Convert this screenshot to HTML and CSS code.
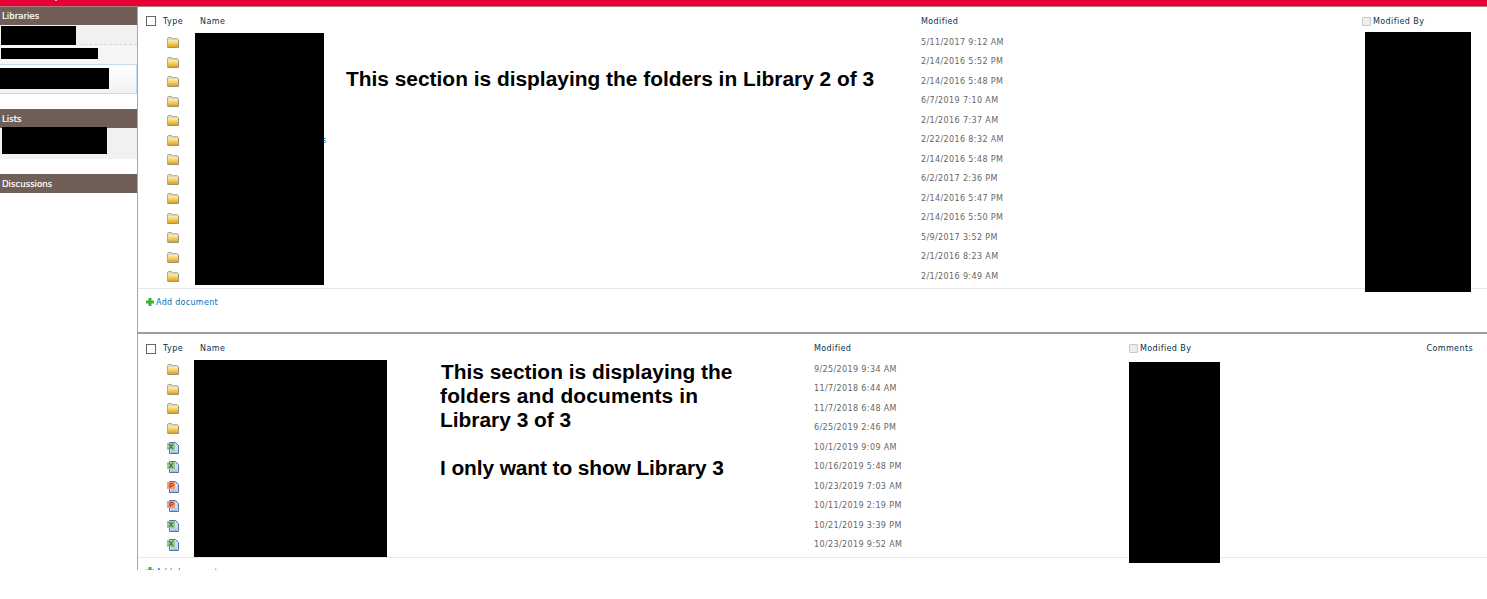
FILE: index.html
```html
<!DOCTYPE html>
<html lang="en">
<head>
<meta charset="utf-8">
<title>Libraries</title>
<link rel="stylesheet" href="styles.css">
</head>
<body>
<svg class="defs" width="0" height="0" aria-hidden="true">
  <defs>
    <linearGradient id="gold" x1="0" y1="0" x2="0" y2="1">
      <stop offset="0" stop-color="#fbeeb4"/>
      <stop offset=".5" stop-color="#f4cd5a"/>
      <stop offset="1" stop-color="#dc9f28"/>
    </linearGradient>
  </defs>
  <symbol id="folder" viewBox="0 0 12 11">
    <path d="M.5 10.5V1.5L1.2.5h3.3l.8 1.2h5.2l.5.5v8.3z" fill="#e0dac4" stroke="#b3aa8e"/>
    <rect x="1" y="3" width="10" height="7" fill="url(#gold)"/>
    <path d="M11.5 3v7.5H1" fill="none" stroke="#9c9480"/>
  </symbol>
  <symbol id="xls" viewBox="0 0 12 12">
    <path d="M2.5.5h6l3 3v8h-9z" fill="#cddcf1" stroke="#56739f"/>
    <path d="M4 9h6M4 10.5h6" stroke="#a3b9d8"/>
    <rect x="0" y="1" width="8" height="7" fill="#9cc598"/>
    <path d="M2 2l4 5M6 2L2 7" stroke="#2a7430" stroke-width="1.1"/>
  </symbol>
  <symbol id="ppt" viewBox="0 0 12 12">
    <path d="M2.5.5h6l3 3v8h-9z" fill="#cddcf1" stroke="#56739f"/>
    <path d="M4 9h6M4 10.5h6" stroke="#a3b9d8"/>
    <rect x="0" y="1" width="8" height="7" fill="#f09a7c"/>
    <path d="M3 7V2.5h2a1.2 1.2 0 0 1 0 2.6H3" fill="none" stroke="#a5321c" stroke-width="1"/>
  </symbol>
  <symbol id="plus" viewBox="0 0 8 8">
    <path d="M2.5 0h3v2.5H8v3H5.5V8h-3V5.5H0v-3h2.5z" fill="#3cb62a"/>
  </symbol>
</svg>

<header class="topbar"><span class="tick"></span></header>

<div class="page">
  <nav class="side">
    <h2 class="side-head">Libraries</h2>
    <div class="side-item"></div>
    <div class="side-item second"></div>
    <div class="side-item current"></div>
    <h2 class="side-head spaced">Lists</h2>
    <div class="side-item list"></div>
    <h2 class="side-head spaced">Discussions</h2>
    <i class="redact r-a"></i>
    <i class="redact r-b"></i>
    <i class="redact r-c"></i>
    <i class="redact r-d"></i>
  </nav>

  <main class="main">
    <section class="lib lib-one">
      <div class="row head">
        <span class="check"></span><span>Type</span><span>Name</span><span>Modified</span>
        <span class="by"><span class="check off"></span>Modified By</span>
      </div>
      <div class="row"><span></span><svg class="ico"><use href="#folder"/></svg><span></span><span class="date">5/11/2017 9:12 AM</span></div>
      <div class="row"><span></span><svg class="ico"><use href="#folder"/></svg><span></span><span class="date">2/14/2016 5:52 PM</span></div>
      <div class="row"><span></span><svg class="ico"><use href="#folder"/></svg><span></span><span class="date">2/14/2016 5:48 PM</span></div>
      <div class="row"><span></span><svg class="ico"><use href="#folder"/></svg><span></span><span class="date">6/7/2019 7:10 AM</span></div>
      <div class="row"><span></span><svg class="ico"><use href="#folder"/></svg><span></span><span class="date">2/1/2016 7:37 AM</span></div>
      <div class="row"><span></span><svg class="ico"><use href="#folder"/></svg><span class="peek">s</span><span class="date">2/22/2016 8:32 AM</span></div>
      <div class="row"><span></span><svg class="ico"><use href="#folder"/></svg><span></span><span class="date">2/14/2016 5:48 PM</span></div>
      <div class="row"><span></span><svg class="ico"><use href="#folder"/></svg><span></span><span class="date">6/2/2017 2:36 PM</span></div>
      <div class="row"><span></span><svg class="ico"><use href="#folder"/></svg><span></span><span class="date">2/14/2016 5:47 PM</span></div>
      <div class="row"><span></span><svg class="ico"><use href="#folder"/></svg><span></span><span class="date">2/14/2016 5:50 PM</span></div>
      <div class="row"><span></span><svg class="ico"><use href="#folder"/></svg><span></span><span class="date">5/9/2017 3:52 PM</span></div>
      <div class="row"><span></span><svg class="ico"><use href="#folder"/></svg><span></span><span class="date">2/1/2016 8:23 AM</span></div>
      <div class="row"><span></span><svg class="ico"><use href="#folder"/></svg><span></span><span class="date">2/1/2016 9:49 AM</span></div>
      <div class="add"><svg class="plus"><use href="#plus"/></svg>Add document</div>
      <i class="redact r-e"></i>
      <i class="redact r-f"></i>
      <p class="note note-one">This section is displaying the folders in Library 2 of 3</p>
    </section>

    <section class="lib lib-two">
      <div class="row head">
        <span class="check"></span><span>Type</span><span>Name</span><span>Modified</span>
        <span class="by"><span class="check off"></span>Modified By</span>
        <span>Comments</span>
      </div>
      <div class="row"><span></span><svg class="ico"><use href="#folder"/></svg><span></span><span class="date">9/25/2019 9:34 AM</span></div>
      <div class="row"><span></span><svg class="ico"><use href="#folder"/></svg><span></span><span class="date">11/7/2018 6:44 AM</span></div>
      <div class="row"><span></span><svg class="ico"><use href="#folder"/></svg><span></span><span class="date">11/7/2018 6:48 AM</span></div>
      <div class="row"><span></span><svg class="ico"><use href="#folder"/></svg><span></span><span class="date">6/25/2019 2:46 PM</span></div>
      <div class="row"><span></span><svg class="ico doc"><use href="#xls"/></svg><span></span><span class="date">10/1/2019 9:09 AM</span></div>
      <div class="row"><span></span><svg class="ico doc"><use href="#xls"/></svg><span></span><span class="date">10/16/2019 5:48 PM</span></div>
      <div class="row"><span></span><svg class="ico doc"><use href="#ppt"/></svg><span></span><span class="date">10/23/2019 7:03 AM</span></div>
      <div class="row"><span></span><svg class="ico doc"><use href="#ppt"/></svg><span></span><span class="date">10/11/2019 2:19 PM</span></div>
      <div class="row"><span></span><svg class="ico doc"><use href="#xls"/></svg><span></span><span class="date">10/21/2019 3:39 PM</span></div>
      <div class="row"><span></span><svg class="ico doc"><use href="#xls"/></svg><span></span><span class="date">10/23/2019 9:52 AM</span></div>
      <div class="add"><svg class="plus"><use href="#plus"/></svg><span class="add-label">Add document</span></div>
      <i class="redact r-g"></i>
      <i class="redact r-h"></i>
      <div class="note note-two">
        <p class="first">This section is displaying the</p>
        <p class="wide">folders and documents in</p>
        <p>Library 3 of 3</p>
        <p>&nbsp;</p>
        <p class="tight">I only want to show Library 3</p>
      </div>
    </section>
  </main>
</div>
</body>
</html>
```
FILE: styles.css
```css
* { box-sizing: border-box; }
html, body { margin: 0; padding: 0; background: #fff; overflow: hidden; }
body { font-family: "DejaVu Sans", Verdana, sans-serif; font-size: 8px; color: #00324f; }
.defs { position: absolute; }

.topbar { height: 7px; background: #e60033; border-bottom: 1px solid #b07a82; position: relative; }
.tick { position: absolute; left: 55px; top: 0; width: 2px; height: 1px; background: #f6c4cf; }

.page { display: flex; height: 563px; overflow: hidden; }

.side { position: relative; width: 138px; flex: none; border-right: 1px solid #a8a8a8; margin-top: -1px; }
.side-head { margin: 0; height: 19px; padding: 1px 0 0 2px; background: #6f5f56; color: #fff; font: 400 8.6px/19px "DejaVu Sans", sans-serif; -webkit-text-stroke: .2px #fff; }
.side-head.spaced { margin-top: 15px; }
.side-item { height: 20px; background: #f1f1f1; border-bottom: 1px dashed #d8d8d8; }
.side-item.second { height: 19px; background: #f6f6f6; border-bottom: 0; }
.side-item.current { height: 30px; background: linear-gradient(#fff, #f1f1f1); border: 1px solid #c6dcec; border-left: 0; }
.side-item.list { height: 31px; border: 0; }

.redact { position: absolute; background: #000; display: block; }
.r-a { left: 1px; top: 20px; width: 75px; height: 19px; }
.r-b { left: 1px; top: 42px; width: 97px; height: 11px; }
.r-c { left: 0; top: 62px; width: 109px; height: 21px; }
.r-d { left: 2px; top: 121px; width: 105px; height: 27px; }

.main { flex: 1; min-width: 0; }
.lib { position: relative; }
.lib-one { --cols: 17px 37px 721px 441px 1fr; height: 327px; border-bottom: 2px solid #a49c90; }
.lib-two { --cols: 17px 37px 614px 315px 1fr auto; }

.row { display: grid; grid-template-columns: var(--cols); align-items: center; height: 19.5px; padding: 0 14px 0 8px; }
.row.head { height: 26px; color: #00324f; letter-spacing: .4px; padding-top: 2px; }
.lib-two .row.head { padding-top: 3px; }

.check { display: block; width: 10px; height: 10px; border: 1px solid #666; background: #fff; }
.check.off { width: 9px; height: 9px; border-color: #c8c8c8; background: #eee; margin-right: 2px; border-radius: 1px; flex: none; }
.by { display: flex; align-items: center; }

.ico { display: block; width: 12px; height: 11px; margin: 0 0 0 4px; }
.ico.doc { height: 12px; }
.date { color: #666; font-size: 8px; letter-spacing: .38px; padding-bottom: 1px; }
.peek { color: #0072bc; padding-left: 122px; }

.add { display: flex; align-items: center; margin-top: 1.75px; height: 27px; padding-left: 8px; border-top: 1px solid #e8e8e8; color: #0072bc; letter-spacing: .3px; }
.lib-two .add { margin-top: 2px; }
.add-label { padding-top: 2px; }
.plus { width: 8px; height: 8px; margin-right: 2px; flex: none; }

.r-e { left: 57px; top: 26px; width: 129px; height: 252px; }
.r-f { left: 1227px; top: 25px; width: 106px; height: 260px; }
.r-g { left: 56px; top: 26px; width: 193px; height: 197px; }
.r-h { left: 991px; top: 28px; width: 91px; height: 201px; }

.note { position: absolute; margin: 0; color: #000; font: 700 20.9px/24px "Liberation Sans", Arial, sans-serif; white-space: nowrap; }
.note p { margin: 0; }
.note .first { margin-left: 1px; }
.note .wide { letter-spacing: .17px; }
.note .tight { letter-spacing: -.1px; }
.note-one { left: 208px; top: 60px; }
.note-two { left: 302px; top: 26px; }
```
